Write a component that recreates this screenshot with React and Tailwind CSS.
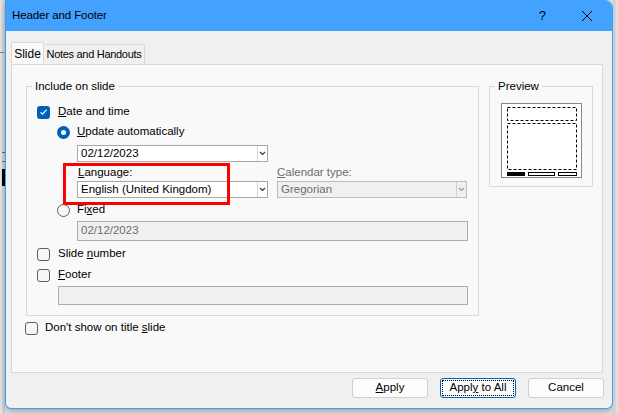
import React from "react";

const font = { fontFamily: '"Liberation Sans", Arial, sans-serif' };

function Chevron({ color = "#333" }) {
  return (
    <svg width="7" height="5" viewBox="0 0 7 5">
      <path d="M1 1 L3.5 3.5 L6 1" fill="none" stroke={color} strokeWidth="1.1" />
    </svg>
  );
}

function Select({ w, text, disabled }) {
  return (
    <div
      className={`flex h-[17px] items-stretch border ${disabled ? "border-[#bcbcbc] bg-[#f0f0f0] text-[#6d6d6d]" : "border-[#a8a8a8] bg-white text-black"}`}
      style={{ width: w }}
    >
      <div className="flex flex-1 items-center whitespace-nowrap pl-[3px] leading-none">{text}</div>
      <div className={`flex w-[10px] items-center justify-center border-l ${disabled ? "border-[#d0d0d0]" : "border-[#d6d6d6]"}`}>
        <Chevron color={disabled ? "#999" : "#333"} />
      </div>
    </div>
  );
}

function Checkbox({ checked }) {
  return checked ? (
    <div className="flex h-[13px] w-[13px] shrink-0 items-center justify-center rounded-[3px] bg-[#005fb8]">
      <svg width="9" height="8" viewBox="0 0 9 8">
        <path d="M1.5 4.2 L3.6 6.2 L7.6 1.6" fill="none" stroke="#fff" strokeWidth="1.1" />
      </svg>
    </div>
  ) : (
    <div className="h-[13px] w-[13px] shrink-0 rounded-[3px] border border-[#5e5e5e] bg-[#f7f7f7]" />
  );
}

function Radio({ checked }) {
  return checked ? (
    <div className="flex h-[13px] w-[13px] shrink-0 items-center justify-center rounded-full bg-[#005fb8]">
      <div className="h-[5px] w-[5px] rounded-full bg-white" />
    </div>
  ) : (
    <div className="h-[13px] w-[13px] shrink-0 rounded-full border border-[#5e5e5e] bg-[#f7f7f7]" />
  );
}

function Btn({ children, focused }) {
  return (
    <div
      className={`flex h-[20px] w-[76px] items-center justify-center rounded-[3px] border bg-[#fdfdfd] ${focused ? "border-[#0067c0]" : "border-[#d0d0d0]"}`}
    >
      {focused ? (
        <div className="flex h-[16px] w-[72px] items-center justify-center border border-dotted border-black">{children}</div>
      ) : (
        children
      )}
    </div>
  );
}

function PreviewThumb() {
  return (
    <svg width="81" height="75" viewBox="0 0 81 75">
      <rect x="0.5" y="0.5" width="80" height="74" fill="#fff" stroke="#888" />
      <rect x="6.5" y="4.5" width="69" height="13" fill="none" stroke="#000" strokeDasharray="3 2" />
      <rect x="6.5" y="20.5" width="69" height="46" fill="none" stroke="#000" strokeDasharray="3 2" />
      <rect x="6" y="69" width="18" height="4" fill="#000" />
      <rect x="27.5" y="69.5" width="26" height="3" fill="#fff" stroke="#000" />
      <rect x="57.5" y="69.5" width="18" height="3" fill="#fff" stroke="#000" />
    </svg>
  );
}

export default function App() {
  return (
    <div className="flex h-[414px] w-[618px] overflow-hidden bg-[#e4e4e4] text-[11.5px] text-black" style={font}>
      {/* background window strip */}
      <div className="flex w-[5px] shrink-0 flex-col bg-gradient-to-r from-[#e9e9e9] to-[#c9c9c9]">
        <div className="mt-[52px] h-[1px] w-[4px] bg-[#888]" />
        <div className="ml-[2px] mt-[99px] h-[1px] w-[3px] bg-[#666]" />
        <div className="ml-[2px] mt-[8px] h-[1px] w-[3px] bg-[#666]" />
        <div className="ml-[2px] mt-[7px] h-[17px] w-[3px] bg-black" />
      </div>

      <div className="flex h-[409px] w-[608px] shrink-0 flex-col overflow-hidden rounded-b-[6px] rounded-tr-[8px] border border-t-0 border-[#3d9cf7] bg-[#f0f0f0] shadow-[0_3px_6px_rgba(0,0,0,0.25)]">
        {/* title bar */}
        <div className="flex h-[31px] shrink-0 items-center bg-[#43a1ff]">
          <span className="ml-[6px] text-[11.5px] tracking-[-0.1px]">Header and Footer</span>
          <span className="ml-auto mr-[35px] text-[13px]">?</span>
          <svg width="12" height="12" viewBox="0 0 12 12" className="mr-[19px]">
            <path d="M1 1 L11 11 M11 1 L1 11" stroke="#000" strokeWidth="1" />
          </svg>
        </div>

        {/* body */}
        <div className="flex flex-col pl-[5px] pt-[11px]">
          {/* tabs */}
          <div className="flex items-end">
            <div className="flex h-[22px] w-[33px] shrink-0 items-center justify-center whitespace-nowrap border border-b-0 border-[#d9d9d9] bg-[#f9f9f9] text-[12px]">
              Slide
            </div>
            <div className="flex h-[20px] w-[101px] shrink-0 items-center justify-center whitespace-nowrap border border-b-0 border-l-0 border-[#d9d9d9] bg-[#f0f0f0] text-[11px] tracking-[-0.3px]">
              Notes and Handouts
            </div>
          </div>

          {/* tab panel */}
          <div className="flex h-[309px] w-[592px] flex-col border border-[#d9d9d9] bg-[#f9f9f9] pl-[14px] pt-[21px]">
            <div className="flex">
              {/* include group */}
              <div className="relative flex h-[230px] w-[453px] flex-col border border-[#d9d9d9] pl-[10px] pt-[18px]">
                <span className="absolute -top-[8px] left-[5px] bg-[#f9f9f9] px-[3px] leading-[14px]">Include on slide</span>

                <div className="flex h-[14px] items-center">
                  <Checkbox checked />
                  <span className="ml-[8px]"><span className="underline">D</span>ate and time</span>
                </div>

                <div className="ml-[20px] flex flex-col">
                  <div className="mt-[6px] flex h-[14px] items-center">
                    <Radio checked />
                    <span className="ml-[7px]"><span className="underline">U</span>pdate automatically</span>
                  </div>

                  <div className="ml-[20px] flex flex-col">
                    <div className="mt-[6px]">
                      <Select w={191} text="02/12/2023" />
                    </div>
                    <div className="mt-[4px] flex h-[14px] items-center">
                      <span className="w-[200px] pl-[1px]"><span className="underline">L</span>anguage:</span>
                      <span className="text-[#6d6d6d]"><span className="underline">C</span>alendar type:</span>
                    </div>
                    <div className="mt-[1px] flex gap-[9px]">
                      <Select w={191} text="English (United Kingdom)" />
                      <Select w={190} text="Gregorian" disabled />
                    </div>
                  </div>

                  <div className="mt-[5px] flex h-[14px] items-center">
                    <Radio />
                    <span className="ml-[7px]">Fi<span className="underline">x</span>ed</span>
                  </div>
                  <div className="ml-[20px] mt-[4px] flex h-[20px] w-[391px] items-center border border-[#adadad] bg-[#f0f0f0] pl-[3px] text-[#6d6d6d]">
                    02/12/2023
                  </div>
                </div>

                <div className="mt-[6px] flex h-[14px] items-center">
                  <Checkbox />
                  <span className="ml-[8px]">Slide <span className="underline">n</span>umber</span>
                </div>
                <div className="mt-[7px] flex h-[14px] items-center">
                  <Checkbox />
                  <span className="ml-[8px]"><span className="underline">F</span>ooter</span>
                </div>
                <div className="ml-[21px] mt-[4px] h-[19px] w-[410px] border border-[#adadad] bg-[#f0f0f0]" />

                {/* annotation */}
                <div className="absolute left-[36px] top-[76px] h-[42px] w-[167px] border-[3px] border-[#ff0000]" />
              </div>

              {/* preview group */}
              <div className="relative ml-[10px] flex h-[101px] w-[104px] flex-col border border-[#d9d9d9] pl-[11px] pt-[16px]">
                <span className="absolute -top-[8px] left-[5px] bg-[#f9f9f9] px-[3px] leading-[14px]">Preview</span>
                <PreviewThumb />
              </div>
            </div>

            <div className="-ml-[1px] mt-[5px] flex h-[14px] items-center">
              <Checkbox />
              <span className="ml-[7px]">Don't show on title <span className="underline">s</span>lide</span>
            </div>
          </div>

          {/* buttons */}
          <div className="mt-[5px] flex w-[593px] justify-end gap-[12px]">
            <Btn><span><span className="underline">A</span>pply</span></Btn>
            <Btn focused><span>Appl<span className="underline">y</span> to All</span></Btn>
            <Btn>Cancel</Btn>
          </div>
        </div>
      </div>
      <div className="flex-1 bg-gradient-to-r from-[#c9c9c9] to-[#e6e6e6]" />
    </div>
  );
}
